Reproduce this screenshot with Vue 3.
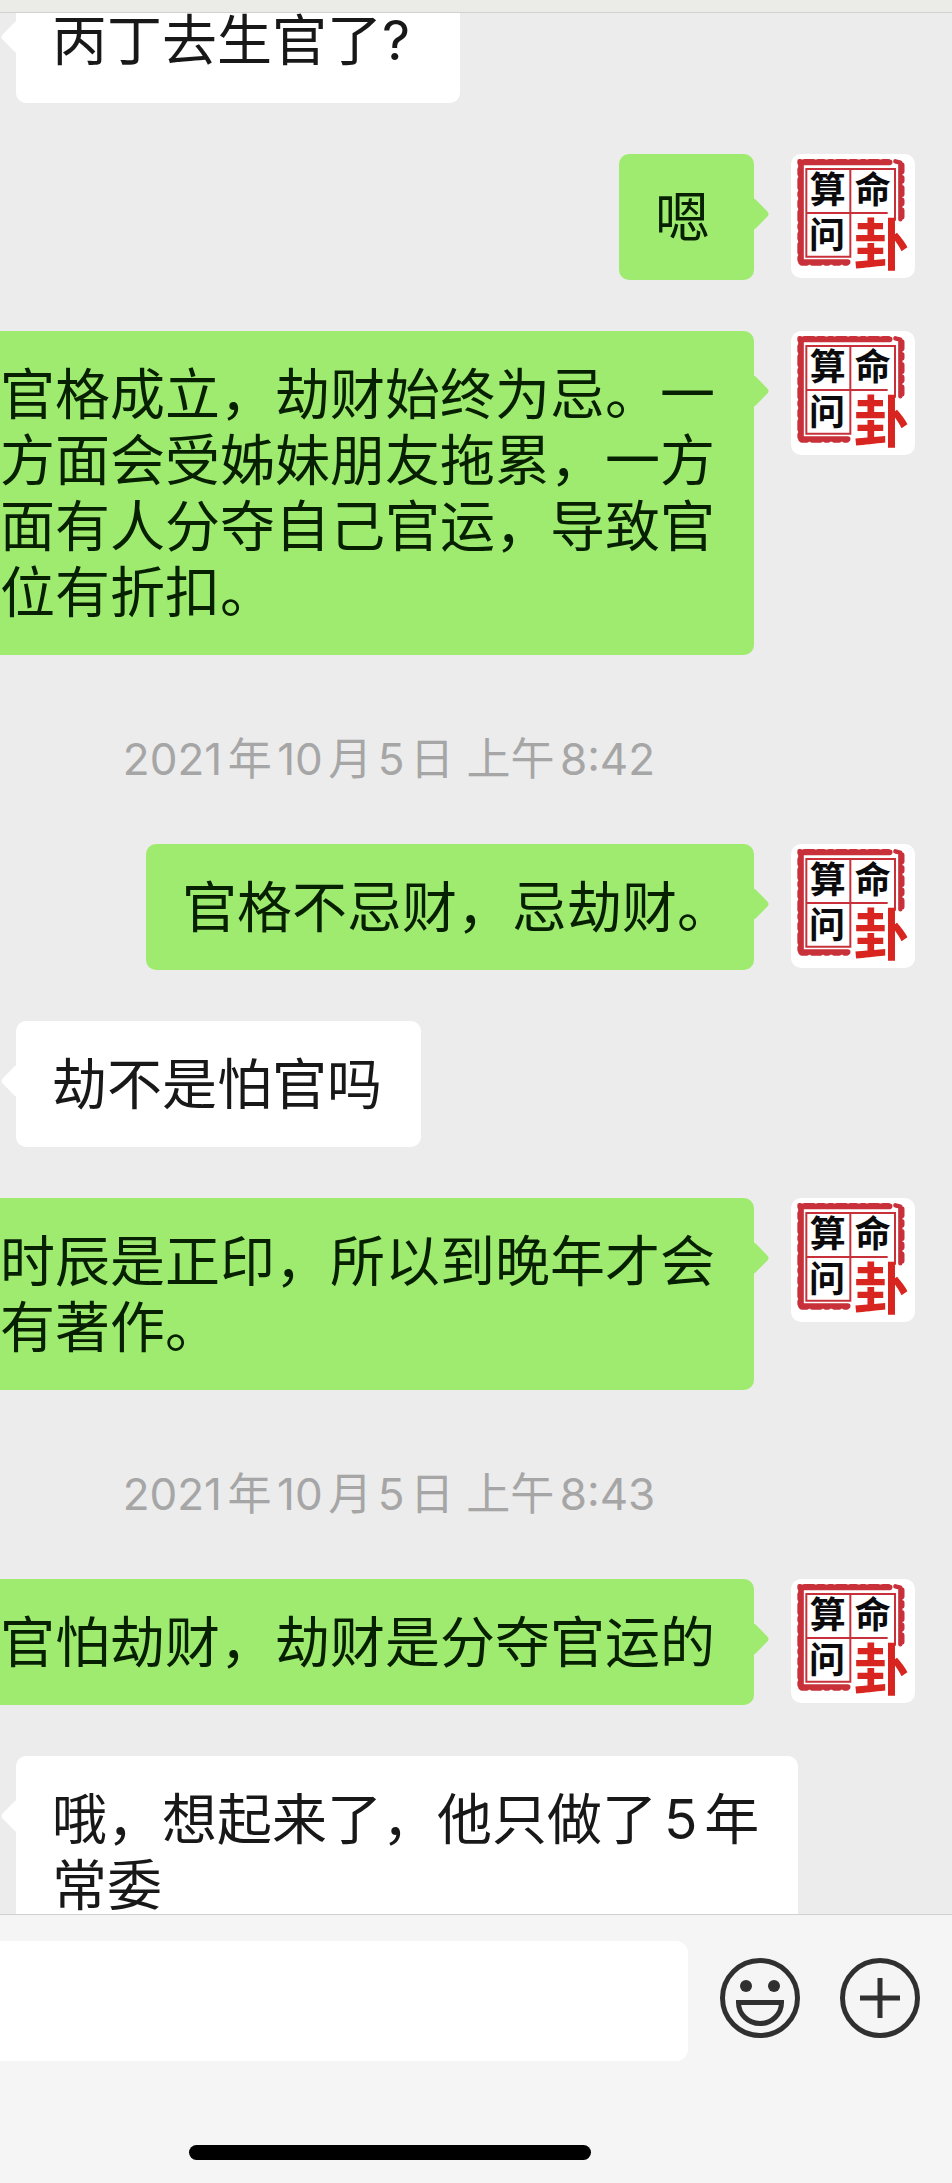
<script setup>
import { ref } from 'vue'

const draft = ref('')

const items = [
  { kind: 'in', lines: ['丙丁去生官了?'], tail: 'ask' },
  { kind: 'out', lines: ['嗯'] },
  {
    kind: 'out',
    lines: [
      '官格成立，劫财始终为忌。一',
      '方面会受姊妹朋友拖累，一方',
      '面有人分夺自己官运，导致官',
      '位有折扣。',
    ],
  },
  { kind: 'time', text: '2021年10月5日 上午8:42' },
  { kind: 'out', lines: ['官格不忌财，忌劫财。'], tail: 'stop' },
  { kind: 'in', lines: ['劫不是怕官吗'] },
  { kind: 'out', lines: ['时辰是正印，所以到晚年才会', '有著作。'] },
  { kind: 'time', text: '2021年10月5日 上午8:43' },
  { kind: 'out', lines: ['官怕劫财，劫财是分夺官运的'] },
  { kind: 'in', lines: ['哦，想起来了，他只做了5年', '常委'] },
]
</script>

<template>
  <div class="app">
    <header class="topbar"></header>

    <main class="chat">
      <ol class="list">
        <li v-for="(item, i) in items" :key="i" :class="['item', item.kind]">
          <time v-if="item.kind === 'time'">{{ item.text }}</time>
          <template v-else>
            <div :class="['bubble', item.tail]">
              <span v-for="line in item.lines" :key="line" class="line">{{ line }}</span>
            </div>
            <svg v-if="item.kind === 'out'" class="avatar" viewBox="32 28 372 372" role="img" aria-label="算命问卦">
              <rect x="32" y="28" width="372" height="372" fill="#fff" />
              <g fill="none" stroke="#c8303a">
                <path d="M328 53H62V352H202" stroke-width="17" stroke-linecap="round" stroke-linejoin="round" />
                <path d="M324 49H57V357H200" stroke-width="12" stroke-linecap="round" stroke-linejoin="round" stroke-dasharray="16 15 26 14 9 17" />
                <path d="M345 50L360 54V224" stroke-width="13" stroke-linecap="round" stroke-linejoin="round" />
                <path d="M366 60V218" stroke-width="13" stroke-linecap="round" stroke-dasharray="22 16 12 18" />
                <path d="M344 228V73H78V336H210V73" stroke-width="6" />
                <path d="M78 205H322" stroke-width="6" />
              </g>
              <g class="seal" fill="#0b0b0d">
                <text x="88" y="175" font-size="108">算</text>
                <text x="223" y="175" font-size="108">命</text>
                <text x="86" y="309" font-size="108">问</text>
              </g>
              <text class="seal" x="220" y="362" font-size="166" fill="#d9251f">卦</text>
            </svg>
          </template>
        </li>
      </ol>
    </main>

    <footer class="composer">
      <form class="controls" @submit.prevent>
        <input v-model="draft" class="field" type="text" aria-label="输入消息" />
        <button class="icon" type="button" aria-label="表情">
          <svg viewBox="0 0 80 80" fill="none" stroke="#303030" stroke-width="5">
            <circle cx="40" cy="40" r="37.500" />
            <circle cx="26" cy="28" r="6" fill="#303030" stroke="none" />
            <circle cx="54" cy="28" r="6" fill="#303030" stroke="none" />
            <path d="M18.500 44.500H61.500A21.500 21 0 0 1 18.500 44.500Z" />
          </svg>
        </button>
        <button class="icon" type="button" aria-label="更多">
          <svg viewBox="0 0 80 80" fill="none" stroke="#303030" stroke-width="5">
            <circle cx="40" cy="40" r="37.500" />
            <path d="M40 20V60M20 40H60" />
          </svg>
        </button>
      </form>
      <div class="home"><div class="home-bar"></div></div>
    </footer>
  </div>
</template>

<style>
body {
  margin: 0;
  background: #ececec;
}
</style>

<style scoped>
.app {
  display: flex;
  flex-direction: column;
  height: 100vh;
  overflow: hidden;
  background: #ececec;
  font-family: Inter, "Noto Sans CJK SC", sans-serif;
  text-autospace: normal;
}

.topbar {
  flex: none;
  height: 12px;
  background: #ebebe8;
  border-bottom: 1px solid #d2d2d2;
}

.chat {
  flex: 1 1 0;
  min-height: 0;
  overflow: hidden;
}

.list {
  display: flex;
  flex-direction: column;
  gap: 51px;
  margin: -36px 0 0;
  padding: 0;
  list-style: none;
}

.item {
  display: flex;
  align-items: flex-start;
}

.in {
  padding-left: 16px;
}

.out {
  justify-content: flex-end;
  gap: 37px;
  padding-right: 37px;
}

.time {
  justify-content: center;
  padding: 23px 174px 4px 0;
  font-size: 44px;
  line-height: 60px;
  color: #a6a6a6;
  white-space: nowrap;
}

.bubble {
  position: relative;
  flex: none;
  box-sizing: border-box;
  min-width: 135px;
  padding: 30px 39px 30px 36px;
  border-radius: 10px;
  background: #fff;
  color: #181818;
  font-size: 55px;
  line-height: 66px;
  white-space: nowrap;
}

.out .bubble {
  background: #9feb70;
  color: #062000;
}

.bubble.ask {
  padding-right: 50px;
}

.bubble.stop {
  padding-right: 22px;
}

.line {
  display: block;
}

.bubble::before {
  content: "";
  position: absolute;
  top: 48px;
  left: -11px;
  width: 24px;
  height: 24px;
  border-radius: 4px;
  background: inherit;
  transform: rotate(45deg);
}

.out .bubble::before {
  left: auto;
  right: -11px;
}

.avatar {
  flex: none;
  width: 124px;
  height: 124px;
  border-radius: 10px;
}

.seal {
  font-family: "Noto Sans CJK SC", sans-serif;
  font-weight: 700;
}

.composer {
  flex: none;
  border-top: 1px solid #d0d0d0;
  background: #f5f5f5;
}

.controls {
  display: flex;
  align-items: flex-start;
  gap: 40px;
  padding: 26px 32px 0 0;
}

.field {
  flex: 1;
  min-width: 0;
  height: 120px;
  margin-right: -8px;
  padding: 0 32px;
  border: 0;
  border-radius: 0 12px 12px 0;
  outline: 0;
  background: #fff;
  color: #181818;
  font: inherit;
  font-size: 55px;
  box-sizing: border-box;
}

.icon {
  flex: none;
  width: 80px;
  height: 80px;
  margin-top: 17px;
  padding: 0;
  border: 0;
  background: none;
}

.icon svg {
  display: block;
}

.home {
  display: flex;
  justify-content: center;
  padding: 84px 172px 23px 0;
}

.home-bar {
  width: 402px;
  height: 15px;
  border-radius: 8px;
  background: #000;
}
</style>
